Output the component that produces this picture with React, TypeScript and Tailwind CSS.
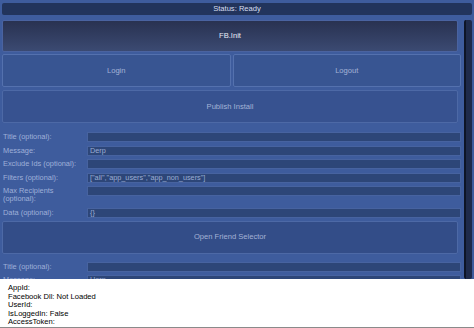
import React from "react";

const font = { fontFamily: '"Liberation Sans", Arial, sans-serif' };

function Field({ label, value, tall }: { label: React.ReactNode; value?: string; tall?: boolean }) {
  return (
    <div className={`shrink-0 flex items-start ${tall ? "h-[22px]" : "h-[13.5px]"}`}>
      <div className="w-[85px] pl-[1px] pt-[1px] text-[7.4px] leading-[8px] text-[#9fb0d9]">{label}</div>
      <div className="flex-1 h-[10px] bg-[#2d4678] border border-[#4763a0] text-[7.3px] leading-[8px] text-[#9badd4] pl-[2px] overflow-hidden whitespace-nowrap">
        {value}
      </div>
    </div>
  );
}

export default function App() {
  return (
    <div className="w-[474px] h-[328px] overflow-hidden flex flex-col bg-[#3e5c9d]" style={font}>
      <div className="h-[279px] shrink-0 flex flex-col overflow-hidden">
        <div className="shrink-0 mx-[2px] mt-[3px] h-[12px] bg-[#22345c] rounded-[2px] flex items-center justify-center text-[7.6px] text-[#d6deef]">
          Status: Ready
        </div>
        <div className="flex flex-1 mt-[5px] min-h-0">
          <div className="flex-1 flex flex-col pl-[2px] overflow-hidden">
            <div className="shrink-0 mr-[4px] h-[32px] rounded-[2px] border border-[#4a63a0] bg-gradient-to-b from-[#293251] to-[#3b4a72] flex items-center justify-center text-[7.6px] text-[#e6ebf6]">
              FB.Init
            </div>
            <div className="shrink-0 flex gap-[2px] mt-[2px] mr-[1px] h-[33px]">
              <div className="flex-1 rounded-[2px] border border-[#5471ae] bg-[#385592] flex items-center justify-center text-[7.6px] text-[#a3b2d6]">
                Login
              </div>
              <div className="flex-1 rounded-[2px] border border-[#5471ae] bg-[#385592] flex items-center justify-center text-[7.6px] text-[#a3b2d6]">
                Logout
              </div>
            </div>
            <div className="shrink-0 mr-[4px] mt-[3px] h-[33px] rounded-[2px] border border-[#4d69a6] bg-[#375290] flex items-center justify-center text-[7.6px] text-[#a3b2d6]">
              Publish Install
            </div>
            <div className="shrink-0 flex flex-col mt-[9px] mr-[1px]">
              <Field label="Title (optional):" />
              <Field label="Message:" value="Derp" />
              <Field label="Exclude Ids (optional):" />
              <Field label="Filters (optional):" value={'["all","app_users","app_non_users"]'} />
              <Field
                tall
                label={
                  <>
                    Max Recipients
                    <br />
                    (optional):
                  </>
                }
              />
              <Field label="Data (optional):" value="{}" />
            </div>
            <div className="shrink-0 mr-[4px] -mt-[1px] h-[33px] rounded-[2px] border border-[#4d69a6] bg-[#334d88] flex items-center justify-center text-[7.6px] text-[#a3b2d6]">
              Open Friend Selector
            </div>
            <div className="shrink-0 flex flex-col mt-[8px] mr-[1px]">
              <Field label="Title (optional):" />
              <Field label="Message:" value="Herp" />
            </div>
          </div>
          <div className="shrink-0 w-[8px] ml-[2px] mr-[2px] bg-[#1e2a4a] border-l-[2px] border-[#0d1426] rounded-[2px]" />
        </div>
      </div>
      <div className="flex-1 bg-white pl-[8px] pt-[5px] text-[7.6px] leading-[8.6px] text-black">
        <div>AppId:</div>
        <div>Facebook Dll: Not Loaded</div>
        <div>UserId:</div>
        <div>IsLoggedIn: False</div>
        <div>AccessToken:</div>
      </div>
      <div className="h-[4px] shrink-0 bg-[#8a8a8a]" />
    </div>
  );
}
